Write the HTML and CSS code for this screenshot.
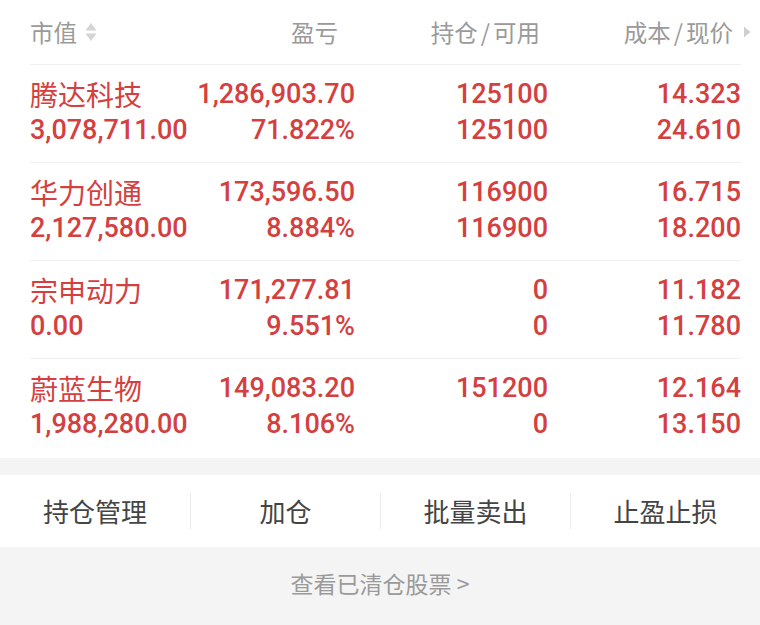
FILE: index.html
```html
<!DOCTYPE html>
<html lang="zh-CN">
<head>
  <meta charset="UTF-8" />
  <meta name="viewport" content="width=device-width, initial-scale=1.0" />
  <title>持仓</title>
  <link rel="stylesheet" href="styles.css">
</head>
<body>
  <div class="holdings">
    <div class="row head">
      <div class="cell name">市值
        <svg class="sort" width="12" height="20" viewBox="0 0 12 20">
          <path d="M6 1 L11.5 8.5 H0.5 Z" fill="#d4d4d4"/>
          <path d="M6 19 L11.5 11.5 H0.5 Z" fill="#d4d4d4"/>
        </svg>
      </div>
      <div class="cell pl">盈亏</div>
      <div class="cell qty">持仓<span class="slash">/</span>可用</div>
      <div class="cell price">成本<span class="slash">/</span>现价
        <svg class="more" width="8" height="12" viewBox="0 0 8 12">
          <path d="M1 0.5 L7.5 6 L1 11.5 Z" fill="#cfcfcf"/>
        </svg>
      </div>
    </div>

    <div id="stockRows"></div>
  </div>

  <div class="gap"></div>

  <div class="toolbar">
    <a href="#">持仓管理</a>
    <a href="#">加仓</a>
    <a href="#">批量卖出</a>
    <a href="#">止盈止损</a>
  </div>

  <div class="cleared">
    <a href="#">查看已清仓股票 &gt;</a>
  </div>

  <script>
    const stocks = [
      { name: "腾达科技", value: "3,078,711.00", pl: "1,286,903.70", rate: "71.822%", hold: "125100", avail: "125100", cost: "14.323", now: "24.610" },
      { name: "华力创通", value: "2,127,580.00", pl: "173,596.50", rate: "8.884%", hold: "116900", avail: "116900", cost: "16.715", now: "18.200" },
      { name: "宗申动力", value: "0.00", pl: "171,277.81", rate: "9.551%", hold: "0", avail: "0", cost: "11.182", now: "11.780" },
      { name: "蔚蓝生物", value: "1,988,280.00", pl: "149,083.20", rate: "8.106%", hold: "151200", avail: "0", cost: "12.164", now: "13.150" }
    ];

    const list = document.getElementById("stockRows");

    stocks.forEach(s => {
      const row = document.createElement("div");
      row.className = "row stock";
      row.innerHTML = `
        <div class="cell"><span class="cn">${s.name}</span><span>${s.value}</span></div>
        <div class="cell"><span>${s.pl}</span><span>${s.rate}</span></div>
        <div class="cell"><span>${s.hold}</span><span>${s.avail}</span></div>
        <div class="cell"><span>${s.cost}</span><span>${s.now}</span></div>`;
      list.appendChild(row);
    });
  </script>
</body>
</html>
```

FILE: styles.css
```css
body {
  margin: 0;
  background-color: #f4f4f4;
  font-family: Roboto, "Noto Sans CJK SC", sans-serif;
}

a {
  text-decoration: none;
  color: inherit;
}

.holdings {
  background-color: #fff;
  padding: 0 19px 0 30px;
}

.row {
  display: grid;
  grid-template-columns: 160px 165px 193px 193px;
}

.head {
  height: 64px;
  align-items: center;
  border-bottom: 1px solid #f0f0f0;
  color: #9a9a9a;
  font-family: "Noto Sans CJK SC", sans-serif;
  font-size: 23.5px;
}

.head .cell {
  display: flex;
  align-items: center;
  justify-content: flex-end;
}

.head .name {
  justify-content: flex-start;
}

.sort {
  margin-left: 8px;
}

.slash {
  margin: 0 3px;
}

.head .pl {
  padding-right: 17px;
}

.head .qty {
  padding-right: 8px;
}

.head .price {
  padding-right: 8px;
  margin-right: -18px;
}

.more {
  margin-left: 10px;
}

.stock {
  padding: 11px 0 14px;
  color: #d4403f;
  font-size: 27px;
  font-weight: 500;
  border-bottom: 1px solid #f0f0f0;
}

.stock:last-child {
  border-bottom: none;
  padding-bottom: 16px;
}

.stock .cell {
  display: flex;
  flex-direction: column;
  align-items: flex-end;
}

.stock .cell:first-child {
  align-items: flex-start;
}

.stock span {
  height: 36px;
  line-height: 36px;
  white-space: nowrap;
}

.stock .cn {
  font-family: "Noto Sans CJK SC", sans-serif;
  font-size: 28px;
  font-weight: 400;
}

.gap {
  height: 17px;
}

.toolbar {
  display: grid;
  grid-template-columns: repeat(4, 1fr);
  align-items: center;
  height: 72px;
  background-color: #fff;
  font-family: "Noto Sans CJK SC", sans-serif;
  font-size: 26px;
  color: #444;
}

.toolbar a {
  text-align: center;
  line-height: 36px;
  border-left: 1px solid #ececec;
}

.toolbar a:first-child {
  border-left: none;
}

.cleared {
  height: 78px;
  padding-top: 20px;
  box-sizing: border-box;
  text-align: center;
  line-height: 32px;
  font-family: "Noto Sans CJK SC", sans-serif;
  font-size: 23px;
  color: #9a9a9a;
}
```
